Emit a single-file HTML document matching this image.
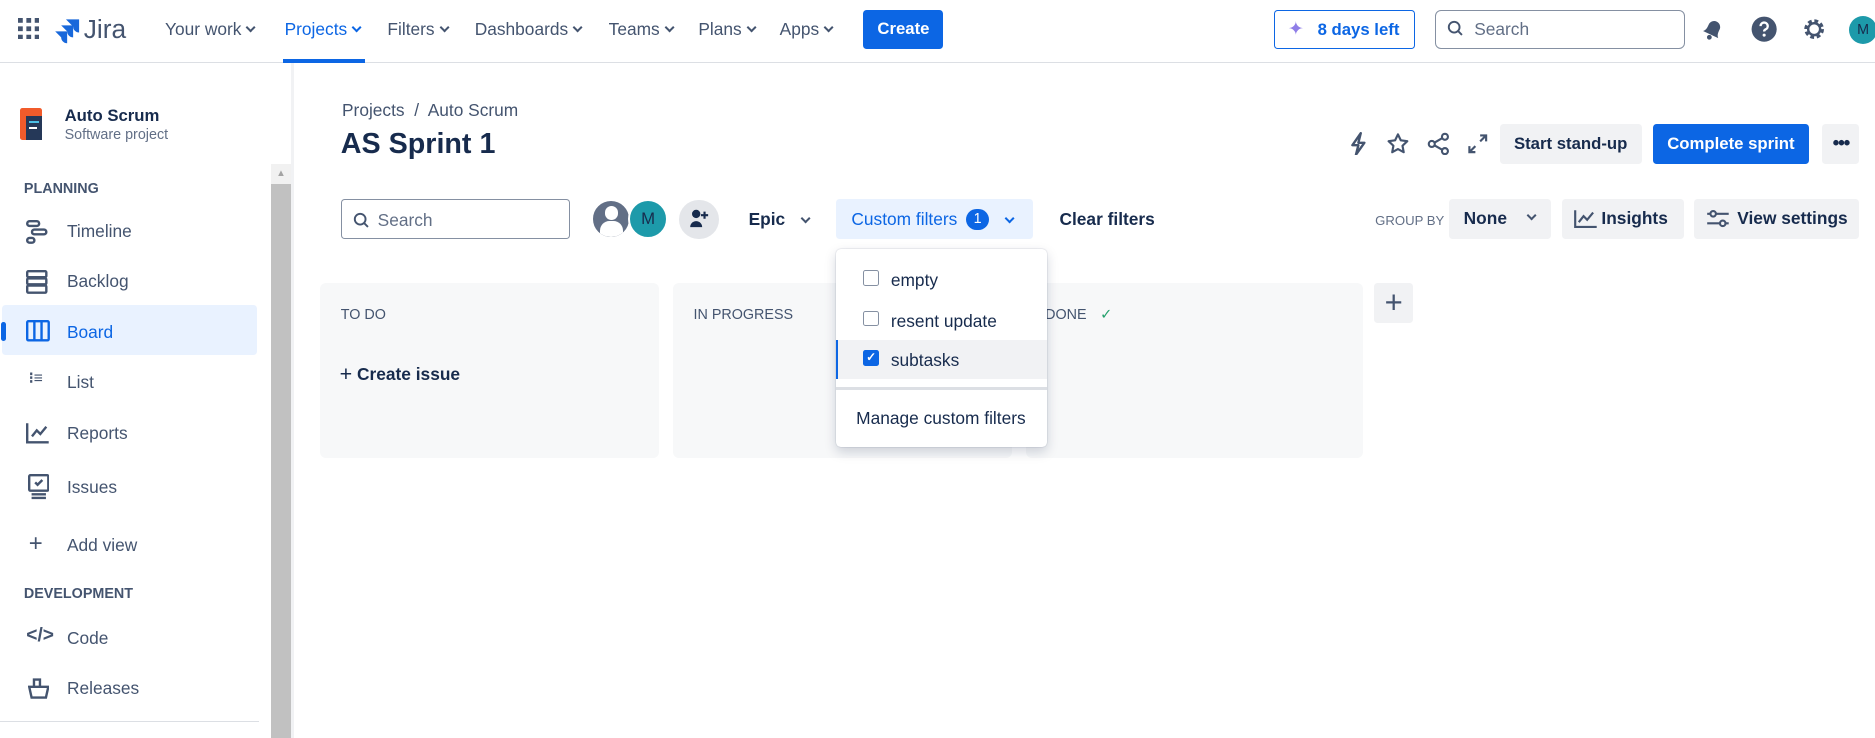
<!DOCTYPE html>
<html><head><meta charset="utf-8"><style>
html{zoom:1.19579}
*{box-sizing:border-box;margin:0;padding:0}
body{width:1568px;height:617px;overflow:hidden;background:#fff;font-family:"Liberation Sans",sans-serif;color:#172b4d;font-size:14px;position:relative}
.a{position:absolute;white-space:nowrap}
.nav{color:#44546f;font-size:14.5px;font-weight:500}
.chev{display:inline-block;width:6px;height:6px;border-right:1.8px solid currentColor;border-bottom:1.8px solid currentColor;transform:rotate(45deg);margin-left:5px;position:relative;top:-3px}
.btn{border-radius:3px;background:#f1f2f4;font-weight:bold;font-size:14px;display:flex;align-items:center;justify-content:center;color:#172b4d}
.side{font-size:14px;color:#44546f}
.sec{font-size:12px;font-weight:bold;color:#44546f}
.col{background:#f7f8f9;border-radius:5px;top:237px;height:146px;width:283px}
.colh{font-size:12px;color:#44546f;font-weight:500}
.cb{width:13px;height:13px;border:1.5px solid #8590a2;border-radius:2px;display:inline-block}
svg{display:block}
</style></head><body>
<div class="a" style="left:0;top:52px;width:1568px;height:1px;background:#dcdfe4"></div>
<svg class="a" style="left:15px;top:15px" width="18" height="18" viewBox="0 0 18 18" fill="#44546f"><rect x="0" y="0" width="4" height="4"/><rect x="7" y="0" width="4" height="4"/><rect x="14" y="0" width="4" height="4"/><rect x="0" y="7" width="4" height="4"/><rect x="7" y="7" width="4" height="4"/><rect x="14" y="7" width="4" height="4"/><rect x="0" y="14" width="4" height="4"/><rect x="7" y="14" width="4" height="4"/><rect x="14" y="14" width="4" height="4"/></svg>
<svg class="a" style="left:45px;top:14px" width="22" height="24" viewBox="0 0 22 24"><path d="M10 2h11v11a5 5 0 0 1-5-5z" fill="#1868db"/><path d="M6 7h10v10a5 5 0 0 1-5-5z" fill="#1868db"/><path d="M1 12h10v10a5 5 0 0 1-5-5z" fill="#1868db"/></svg>
<div class="a" style="left:70px;top:12px;font-size:22px;color:#44546f">Jira</div>
<div class="a nav" style="left:138px;top:16px">Your work<span class="chev"></span></div>
<div class="a nav" style="left:238px;top:16px;color:#0c66e4">Projects<span class="chev"></span></div>
<div class="a" style="left:237px;top:49px;width:68px;height:4px;background:#0c66e4"></div>
<div class="a nav" style="left:324px;top:16px">Filters<span class="chev"></span></div>
<div class="a nav" style="left:397px;top:16px">Dashboards<span class="chev"></span></div>
<div class="a nav" style="left:509px;top:16px">Teams<span class="chev"></span></div>
<div class="a nav" style="left:584px;top:16px">Plans<span class="chev"></span></div>
<div class="a nav" style="left:652px;top:16px">Apps<span class="chev"></span></div>
<div class="a btn" style="left:722px;top:8px;width:67px;height:33px;background:#0c66e4;color:#fff">Create</div>
<div class="a" style="left:1065px;top:8px;width:118px;height:33px;border:1px solid #0c66e4;border-radius:3px;color:#0c66e4;font-weight:bold;font-size:14px;padding:8px 0 0 36px">8 days left</div>
<div class="a" style="left:1077px;top:14px;color:#8f7ee7;font-size:16px">✦</div>
<div class="a" style="left:1200px;top:8px;width:209px;height:33px;border:1px solid #8590a2;border-radius:5px;color:#626f86;font-size:14.5px;padding:7px 0 0 32px">Search</div>
<svg class="a" style="left:1210px;top:17px" width="14" height="14" viewBox="0 0 14 14" fill="none" stroke="#44546f" stroke-width="1.6"><circle cx="6" cy="6" r="4.5"/><path d="M9.5 9.5l3 3"/></svg>
<svg class="a" style="left:1422px;top:13px" width="22" height="22" viewBox="0 0 22 22"><g transform="rotate(25 11 11)"><path d="M4 16c2-2 2-4 2-7a5 5 0 0 1 10 0c0 3 0 5 2 7z" fill="#44546f"/><circle cx="11" cy="18.5" r="2" fill="#44546f"/></g></svg>
<svg class="a" style="left:1464px;top:13px" width="22" height="22" viewBox="0 0 22 22"><circle cx="11" cy="11" r="10.5" fill="#44546f"/><path d="M8 8.5a3 3 0 1 1 4 2.8c-.8.4-1 .8-1 1.7" stroke="#fff" stroke-width="2" fill="none"/><circle cx="11" cy="16" r="1.3" fill="#fff"/></svg>
<svg class="a" style="left:1506px;top:13px" width="22" height="22" viewBox="0 0 22 22"><circle cx="11" cy="11" r="6.5" fill="none" stroke="#44546f" stroke-width="3.5" stroke-dasharray="3 2.1"/><circle cx="11" cy="11" r="5" fill="none" stroke="#44546f" stroke-width="2"/></svg>
<div class="a" style="left:1546px;top:13px;width:24px;height:24px;border-radius:50%;background:#1d9aaa;color:#172b4d;font-size:12px;text-align:center;line-height:24px">M</div>
<div class="a" style="left:243px;top:53px;width:3px;height:564px;background:#f1f2f4"></div>
<div class="a" style="left:227px;top:137px;width:16px;height:480px;background:#c1c1c1"></div>
<div class="a" style="left:227px;top:137px;width:16px;height:17px;background:#f1f1f1;color:#a3a3a3;font-size:8px;text-align:center;line-height:17px">▲</div>
<div class="a" style="left:17px;top:90px;width:18px;height:27px;background:#f15b2b;border-radius:2px"></div>
<div class="a" style="left:22px;top:97px;width:13px;height:20px;background:#253858"></div>
<div class="a" style="left:24px;top:101px;width:9px;height:2px;background:#4bc0e6"></div>
<div class="a" style="left:24px;top:106px;width:7px;height:2px;background:#fff"></div>
<div class="a" style="left:54px;top:89px;font-weight:bold;font-size:14px;color:#172b4d">Auto Scrum</div>
<div class="a" style="left:54px;top:106px;font-size:12px;color:#626f86">Software project</div>
<div class="a sec" style="left:20px;top:151px">PLANNING</div>
<div class="a" style="left:2px;top:255px;width:213px;height:42px;background:#e9f2ff;border-radius:3px"></div>
<div class="a" style="left:1px;top:269px;width:4px;height:16px;background:#0c66e4;border-radius:2px"></div>
<svg class="a" style="left:22px;top:184px" width="18" height="20" viewBox="0 0 18 20" fill="none" stroke="#44546f" stroke-width="2"><rect x="1" y="1" width="10" height="4" rx="2"/><rect x="5" y="8" width="12" height="4" rx="2"/><rect x="1" y="15" width="6" height="4" rx="2"/></svg>
<div class="a side" style="left:56px;top:185px;font-size:14.5px">Timeline</div>
<svg class="a" style="left:22px;top:226px" width="18" height="20" viewBox="0 0 18 20" fill="none" stroke="#44546f" stroke-width="2"><rect x="1" y="1" width="16" height="5" rx="1"/><rect x="1" y="7" width="16" height="5" rx="1"/><rect x="1" y="13" width="16" height="6" rx="1"/></svg>
<div class="a side" style="left:56px;top:227px;font-size:14.5px">Backlog</div>
<svg class="a" style="left:22px;top:268px" width="20" height="18" viewBox="0 0 20 18" fill="none" stroke="#0c66e4" stroke-width="2"><rect x="1" y="1" width="18" height="16" rx="1"/><path d="M7 1v16M13 1v16"/></svg>
<div class="a side" style="left:56px;top:269px;color:#0c66e4;font-size:14.5px">Board</div>
<div class="a side" style="left:24px;top:309px;font-size:13px;font-weight:bold">⁝≡</div>
<div class="a side" style="left:56px;top:311px;font-size:14.5px">List</div>
<svg class="a" style="left:22px;top:353px" width="20" height="18" viewBox="0 0 20 18" fill="none" stroke="#44546f" stroke-width="2"><path d="M1 1v16h18M5 12l4-5 3 3 5-6"/></svg>
<div class="a side" style="left:56px;top:354px;font-size:14.5px">Reports</div>
<svg class="a" style="left:23px;top:396px" width="18" height="22" viewBox="0 0 18 22" fill="none" stroke="#44546f" stroke-width="2"><rect x="1" y="1" width="16" height="13" rx="1"/><path d="M6 7l2 2 4-4M3 17h12M3 20h12"/></svg>
<div class="a side" style="left:56px;top:399px;font-size:14.5px">Issues</div>
<div class="a side" style="left:24px;top:443px;font-size:20px">+</div>
<div class="a side" style="left:56px;top:447px;font-size:14.5px">Add view</div>
<div class="a sec" style="left:20px;top:490px">DEVELOPMENT</div>
<div class="a side" style="left:22px;top:523px;font-size:16px;font-weight:bold">&lt;/&gt;</div>
<div class="a side" style="left:56px;top:525px;font-size:14.5px">Code</div>
<svg class="a" style="left:23px;top:565px" width="18" height="20" viewBox="0 0 18 20" fill="none" stroke="#44546f" stroke-width="2"><path d="M5 8V3h5v5M1 9h16l-2 9H3z"/></svg>
<div class="a side" style="left:56px;top:567px;font-size:14.5px">Releases</div>
<div class="a" style="left:0;top:603px;width:217px;height:1px;background:#dcdfe4"></div>
<div class="a" style="left:286px;top:84px;color:#44546f;font-size:14.5px">Projects &nbsp;/&nbsp; Auto Scrum</div>
<div class="a" style="left:285px;top:107px;font-size:24px;font-weight:bold;color:#172b4d">AS Sprint 1</div>
<svg class="a" style="left:1129px;top:110px" width="14" height="20" viewBox="0 0 14 20"><path d="M9 1L2 11h5l-2 8 7-10H7z" fill="none" stroke="#44546f" stroke-width="2" stroke-linejoin="round"/></svg>
<svg class="a" style="left:1159px;top:110px" width="20" height="20" viewBox="0 0 20 20"><path d="M10 2l2.4 5 5.4.7-4 3.8 1 5.4-4.8-2.6-4.8 2.6 1-5.4-4-3.8 5.4-.7z" fill="none" stroke="#44546f" stroke-width="1.8" stroke-linejoin="round"/></svg>
<svg class="a" style="left:1193px;top:110px" width="20" height="20" viewBox="0 0 20 20" fill="none" stroke="#44546f" stroke-width="1.8"><circle cx="15" cy="4" r="2.5"/><circle cx="4" cy="10" r="2.5"/><circle cx="15" cy="16" r="2.5"/><path d="M6 9l7-4M6 11l7 4"/></svg>
<svg class="a" style="left:1227px;top:111px" width="18" height="18" viewBox="0 0 18 18" fill="none" stroke="#44546f" stroke-width="1.8"><path d="M11 2h5v5M16 2l-5 5M7 16H2v-5M2 16l5-5"/></svg>
<div class="a btn" style="left:1254px;top:104px;width:119px;height:33px">Start stand-up</div>
<div class="a btn" style="left:1382px;top:104px;width:131px;height:33px;background:#0c66e4;color:#fff">Complete sprint</div>
<div class="a btn" style="left:1524px;top:104px;width:31px;height:33px;font-size:16px;letter-spacing:-1px">•••</div>
<div class="a" style="left:285px;top:166px;width:192px;height:34px;border:1px solid #8590a2;border-radius:3px;color:#626f86;font-size:14.5px;padding:9px 0 0 30px">Search</div>
<svg class="a" style="left:295px;top:177px" width="14" height="14" viewBox="0 0 14 14" fill="none" stroke="#44546f" stroke-width="1.6"><circle cx="6" cy="6" r="4.5"/><path d="M9.5 9.5l3 3"/></svg>
<div class="a" style="left:494px;top:166px;width:34px;height:34px;border-radius:50%;background:#626f86;border:2px solid #fff;overflow:hidden"><div style="position:absolute;left:10px;top:5px;width:11px;height:11px;border-radius:50%;background:#fff"></div><div style="position:absolute;left:6px;top:17px;width:19px;height:16px;border-radius:8px 8px 0 0;background:#fff"></div></div>
<div class="a" style="left:525px;top:166px;width:34px;height:34px;border-radius:50%;background:#1d9aaa;border:2px solid #fff;text-align:center;line-height:30px;font-size:14px;color:#172b4d">M</div>
<div class="a" style="left:568px;top:167px;width:33px;height:33px;border-radius:50%;background:#e4e6ea"></div>
<svg class="a" style="left:576px;top:174px" width="18" height="18" viewBox="0 0 18 18" fill="#172b4d"><circle cx="6" cy="5" r="3.5"/><path d="M1 16a5 5 0 0 1 10 0z"/><path d="M13 3v6M10 6h6" stroke="#172b4d" stroke-width="1.8"/></svg>
<div class="a" style="left:626px;top:175px;font-weight:bold;font-size:14.5px">Epic</div>
<div class="a" style="left:666px;top:176px;color:#44546f"><span class="chev"></span></div>
<div class="a" style="left:699px;top:166px;width:165px;height:34px;background:#e9f2ff;border-radius:3px"></div>
<div class="a" style="left:712px;top:175px;color:#0c66e4;font-size:14.5px;font-weight:500">Custom filters</div>
<div class="a" style="left:808px;top:175px;width:19px;height:17px;border-radius:9px;background:#0c66e4;color:#fff;font-size:12px;text-align:center;line-height:17px">1</div>
<div class="a" style="left:836px;top:176px;color:#0c66e4"><span class="chev"></span></div>
<div class="a" style="left:886px;top:175px;font-weight:bold;font-size:14.5px;color:#172b4d">Clear filters</div>
<div class="a" style="left:1150px;top:178px;font-size:11px;color:#626f86">GROUP BY</div>
<div class="a btn" style="left:1212px;top:166px;width:85px;height:34px;justify-content:flex-start;padding-left:12px;font-size:14.5px">None<span class="chev" style="margin-left:18px;color:#44546f"></span></div>
<div class="a btn" style="left:1306px;top:166px;width:102px;height:34px;font-size:14.5px;padding-left:20px">Insights</div>
<svg class="a" style="left:1316px;top:175px" width="20" height="16" viewBox="0 0 20 16" fill="none" stroke="#44546f" stroke-width="1.8"><path d="M1 1v14h18M4 11l4-5 3 3 5-6"/></svg>
<div class="a btn" style="left:1417px;top:166px;width:138px;height:34px;font-size:14.5px;padding-left:26px">View settings</div>
<svg class="a" style="left:1427px;top:175px" width="20" height="16" viewBox="0 0 20 16" fill="none" stroke="#44546f" stroke-width="1.8"><path d="M1 4h18M1 12h18"/><circle cx="6" cy="4" r="2.3" fill="#f1f2f4"/><circle cx="14" cy="12" r="2.3" fill="#f1f2f4"/></svg>
<div class="a col" style="left:268px"></div>
<div class="a col" style="left:563px"></div>
<div class="a col" style="left:858px;width:282px"></div>
<div class="a colh" style="left:285px;top:257px">TO DO</div>
<div class="a colh" style="left:580px;top:257px">IN PROGRESS</div>
<div class="a colh" style="left:874px;top:257px">DONE <span style="color:#22a06b;margin-left:8px">✓</span></div>
<div class="a" style="left:284px;top:302px;font-weight:bold;font-size:14.5px"><span style="font-weight:normal;font-size:18px;position:relative;top:1px">+</span> Create issue</div>
<div class="a btn" style="left:1149px;top:237px;width:33px;height:33px;font-size:26px;font-weight:normal;color:#44546f">+</div>
<div class="a" style="left:699px;top:208px;width:177px;height:166px;background:#fff;border-radius:4px;box-shadow:0 4px 10px rgba(9,30,66,.18),0 0 1px rgba(9,30,66,.3)"></div>
<div class="a" style="left:699px;top:284px;width:177px;height:33px;background:#f1f2f4"></div>
<div class="a" style="left:699px;top:284px;width:2px;height:33px;background:#0c66e4"></div>
<div class="a" style="left:722px;top:226px"><span class="cb"></span></div>
<div class="a" style="left:745px;top:226px;font-size:14.5px">empty</div>
<div class="a" style="left:722px;top:260px"><span class="cb"></span></div>
<div class="a" style="left:745px;top:260px;font-size:14.5px">resent update</div>
<div class="a" style="left:722px;top:293px;width:13px;height:13px;background:#0c66e4;border-radius:2px;color:#fff;font-size:10px;text-align:center;line-height:13px;font-weight:bold">✓</div>
<div class="a" style="left:745px;top:293px;font-size:14.5px">subtasks</div>
<div class="a" style="left:699px;top:324px;width:177px;height:2px;background:#dcdfe4"></div>
<div class="a" style="left:716px;top:341px;font-size:14.5px;color:#172b4d">Manage custom filters</div>
</body></html>
